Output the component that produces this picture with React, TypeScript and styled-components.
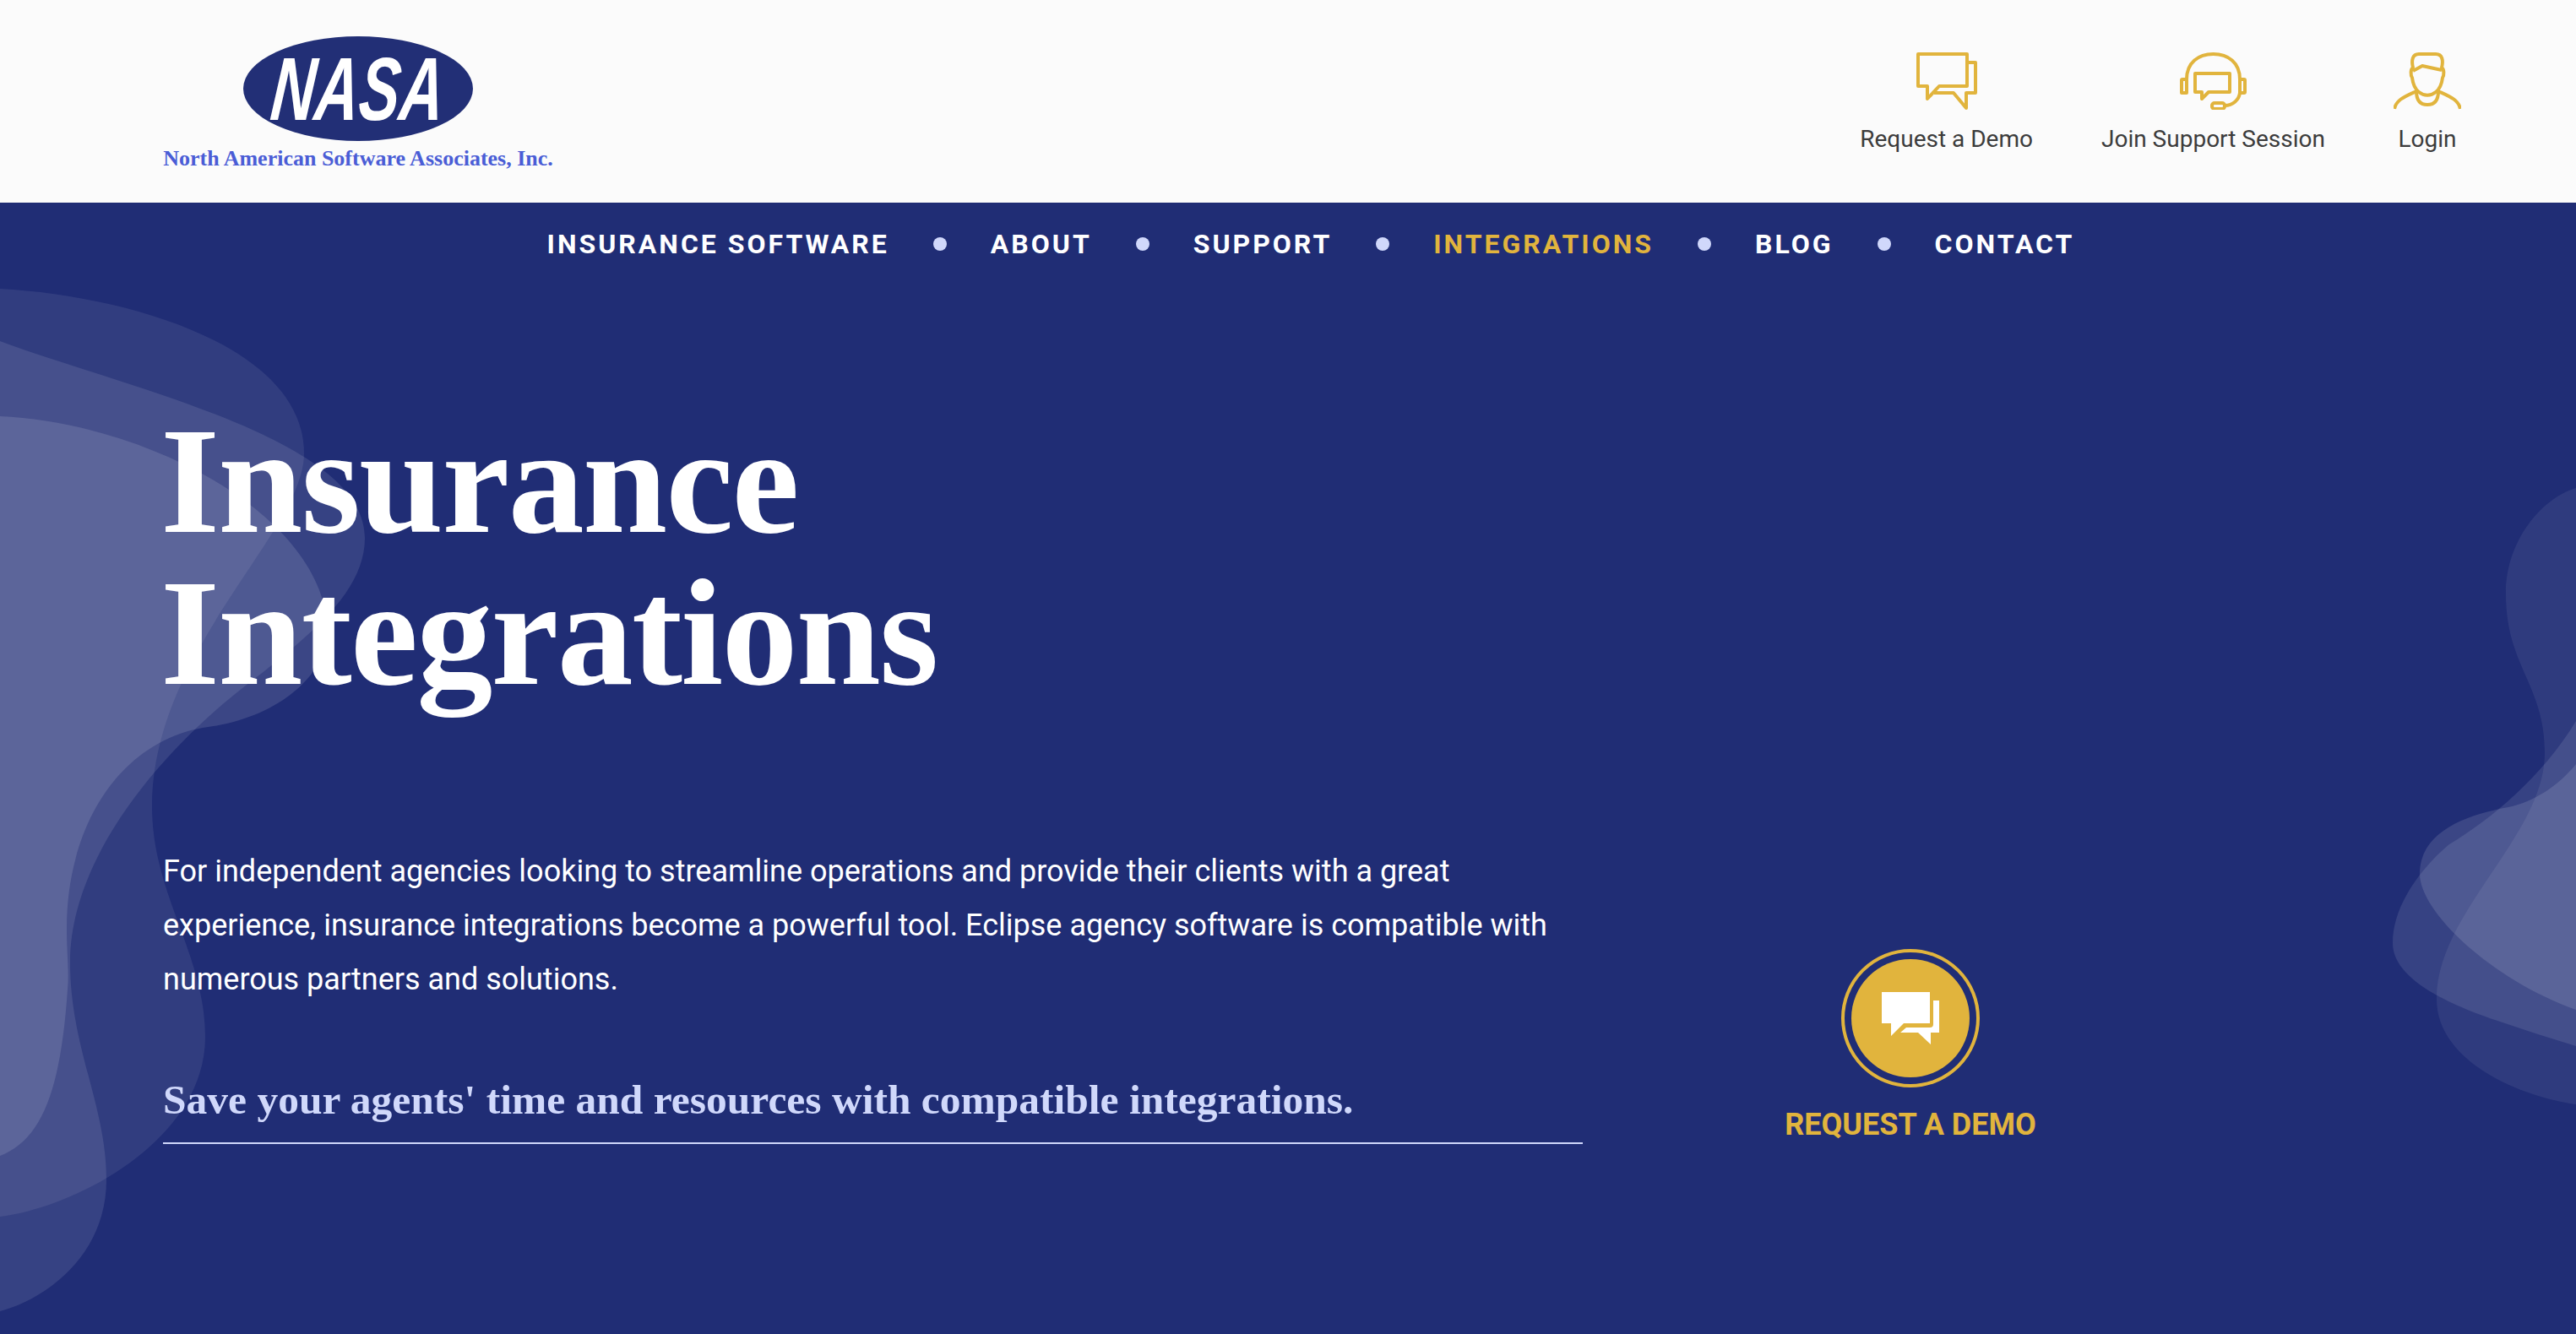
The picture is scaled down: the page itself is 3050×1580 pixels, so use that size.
// App.tsx
import { Fragment } from "react";
import styled, { createGlobalStyle } from "styled-components";

const GlobalStyle = createGlobalStyle`
  html, body {
    margin: 0;
    padding: 0;
    background: #202d75;
  }
  * { box-sizing: border-box; }
`;

const gold = "#e1b43d";

const Page = styled.div`
  width: 3050px;
  height: 1580px;
  position: relative;
  overflow: hidden;
  background: #202d75;
  font-family: Roboto, "Liberation Sans", sans-serif;
`;

const Header = styled.header`
  height: 240px;
  background: #fbfbfb;
  display: flex;
  justify-content: space-between;
  padding: 43px 142px 0 194px;
`;

const Logo = styled.a`
  display: flex;
  flex-direction: column;
  align-items: center;
  width: 460px;
`;

const Oval = styled.div`
  width: 272px;
  height: 124px;
  border-radius: 50%;
  background: #222f76;
  display: flex;
  align-items: center;
  justify-content: center;
  overflow: hidden;
`;

const LogoMark = styled.span`
  color: #fff;
  font-family: "Liberation Sans", sans-serif;
  font-style: italic;
  font-weight: 700;
  font-size: 106px;
  line-height: 1;
  transform: scaleX(0.68) skewX(-8deg);
`;

const LogoName = styled.div`
  margin-top: 5px;
  color: #4a5dd6;
  font-family: "Liberation Serif", serif;
  font-weight: 700;
  font-size: 26px;
  line-height: 32px;
  white-space: nowrap;
`;

const Actions = styled.nav`
  display: flex;
  gap: 81px;
  padding-top: 19px;
  margin-right: -6px;
`;

const Action = styled.a`
  display: flex;
  flex-direction: column;
  align-items: center;
  color: #3c3c3c;
  font-size: 28px;
  line-height: 36px;
  white-space: nowrap;

  svg {
    height: 68px;
    margin-bottom: 17px;
    fill: none;
    stroke: ${gold};
    stroke-width: 4;
    stroke-linejoin: round;
  }
`;

const MainNav = styled.nav`
  position: relative;
  z-index: 1;
  height: 97px;
  display: flex;
  align-items: center;
  justify-content: center;
  gap: 52px;
  padding: 1px 0 0 54px;
`;

const NavLink = styled.a<{ $active?: boolean }>`
  color: ${(p) => (p.$active ? gold : "#fff")};
  font-size: 32px;
  font-weight: 700;
  letter-spacing: 3px;
  white-space: nowrap;
`;

const Dot = styled.span`
  width: 16px;
  height: 16px;
  border-radius: 50%;
  background: #d0d8fb;
`;

const Waves = styled.svg`
  position: absolute;
  left: 0;
  top: 0;
  width: 3050px;
  height: 1580px;

  path {
    fill: #fff;
  }
`;

const Hero = styled.main`
  position: relative;
  z-index: 1;
  display: flex;
  padding: 143px 0 0 193px;
`;

const Copy = styled.section`
  width: 1681px;
`;

const Title = styled.h1`
  margin: 0 0 0 -3px;
  color: #fff;
  font-family: "Liberation Serif", serif;
  font-weight: 700;
  font-size: 180px;
  line-height: 180px;
  letter-spacing: -1.7px;
`;

const Lead = styled.p`
  margin: 160px 0 0;
  color: #fff;
  font-size: 36px;
  line-height: 64px;
`;

const Tagline = styled.h2`
  margin: 81px 0 0;
  padding-bottom: 20px;
  border-bottom: 2px solid #d0d8fb;
  color: #d0d8fb;
  font-family: "Liberation Serif", serif;
  font-weight: 700;
  font-size: 49.5px;
  line-height: 60px;
  white-space: nowrap;
`;

const Demo = styled.a`
  margin: 644px 0 0 241px;
  display: flex;
  flex-direction: column;
  align-items: center;
  width: 294px;
`;

const Ring = styled.div`
  width: 164px;
  height: 164px;
  border-radius: 50%;
  border: 4px solid ${gold};
  display: flex;
  align-items: center;
  justify-content: center;
`;

const Disc = styled.div`
  width: 140px;
  height: 140px;
  border-radius: 50%;
  background: ${gold};
  display: flex;
  align-items: center;
  justify-content: center;

  svg {
    width: 68px;
    height: 62px;
    fill: #fff;
  }
`;

const DemoLabel = styled.div`
  margin-top: 22px;
  color: ${gold};
  font-size: 36px;
  font-weight: 700;
  line-height: 44px;
  white-space: nowrap;
`;

const ChatIcon = () => (
  <svg viewBox="0 0 72 68" width="72">
    <path d="M2 2H60V40H27L13 55V40H2Z" />
    <path d="M61 12H70V48H59V66L44 48H21" />
  </svg>
);

const HeadsetIcon = () => (
  <svg viewBox="0 0 79 68" width="79">
    <path d="M8 32C8 12 22 2 39.500 2S71 12 71 32V48" />
    <path d="M8 32V48H2V33Q2 32 3 32Z" />
    <path d="M71 32H76Q77 32 77 33V47Q77 48 76 48H71" />
    <path d="M18 25H59V47H34L26 55V47H18Z" />
    <path d="M71 48C70 56 63 63 53 63" />
    <rect x="38" y="60" width="15" height="7" rx="3" />
  </svg>
);

const UserIcon = () => (
  <svg viewBox="0 0 80 68" width="80">
    <path d="M1 67C3 56 14 52 27 46M79 67C77 56 66 52 53 46" />
    <path d="M23 18C21 10 22 2 30 2H50C58 2 59 10 57 18C60 20 60 27 58 30C57 38 54 44 50 47C44 52 36 52 30 47C26 44 23 38 22 30C20 27 20 20 23 18Z" />
    <path d="M23 22L34 16L57 21" />
    <path d="M27 46C27 56 31 62 40 62S53 56 53 46" />
  </svg>
);

const items = ["INSURANCE SOFTWARE", "ABOUT", "SUPPORT", "INTEGRATIONS", "BLOG", "CONTACT"];

export default function App() {
  return (
    <Page>
      <GlobalStyle />
      <Header>
        <Logo>
          <Oval>
            <LogoMark>NASA</LogoMark>
          </Oval>
          <LogoName>North American Software Associates, Inc.</LogoName>
        </Logo>
        <Actions>
          <Action>
            <ChatIcon />
            Request a Demo
          </Action>
          <Action>
            <HeadsetIcon />
            Join Support Session
          </Action>
          <Action>
            <UserIcon />
            Login
          </Action>
        </Actions>
      </Header>

      <Waves viewBox="0 0 3050 1580">
        <path fillOpacity="0.08" d="M0 342C150 350 360 410 360 537C360 630 180 770 180 955C180 1060 243 1130 243 1228C243 1350 90 1430 0 1441Z" />
        <path fillOpacity="0.1" d="M0 404C150 460 432 520 432 637C432 700 370 750 300 805C200 880 83 1010 83 1140C83 1240 126 1310 126 1397C126 1490 50 1540 0 1553Z" />
        <path fillOpacity="0.12" d="M0 493C170 500 388 610 388 750C388 790 340 850 240 862C140 880 79 980 79 1100C79 1130 82 1150 80 1172C72 1290 50 1350 0 1369Z" />
        <path fillOpacity="0.07" d="M3050 578C3010 590 2967 640 2967 703C2967 790 3013 810 3013 892C3013 990 2885 1080 2885 1183C2885 1260 2990 1300 3050 1308Z" />
        <path fillOpacity="0.1" d="M3050 854C3010 920 2950 970 2900 1000C2870 1025 2833 1070 2833 1117C2833 1160 2900 1190 2960 1210C2990 1220 3020 1230 3050 1239Z" />
        <path fillOpacity="0.12" d="M3050 905C3030 930 3000 950 2970 956C2920 965 2865 985 2865 1035C2865 1080 2950 1160 3050 1196Z" />
      </Waves>

      <MainNav>
        {items.map((item, i) => (
          <Fragment key={item}>
            {i > 0 && <Dot />}
            <NavLink $active={item === "INTEGRATIONS"}>{item}</NavLink>
          </Fragment>
        ))}
      </MainNav>

      <Hero>
        <Copy>
          <Title>
            Insurance
            <br />
            Integrations
          </Title>
          <Lead>
            For independent agencies looking to streamline operations and provide their clients with a great
            <br />
            experience, insurance integrations become a powerful tool. Eclipse agency software is compatible with
            <br />
            numerous partners and solutions.
          </Lead>
          <Tagline>Save your agents' time and resources with compatible integrations.</Tagline>
        </Copy>
        <Demo>
          <Ring>
            <Disc>
              <svg viewBox="0 0 68 62">
                <path d="M0 0H57V37H26L11 52V37H0Z" />
                <path d="M61 10H68V48H58V62L43 48H22L29 42H57Q61 42 61 38Z" />
              </svg>
            </Disc>
          </Ring>
          <DemoLabel>REQUEST A DEMO</DemoLabel>
        </Demo>
      </Hero>
    </Page>
  );
}
